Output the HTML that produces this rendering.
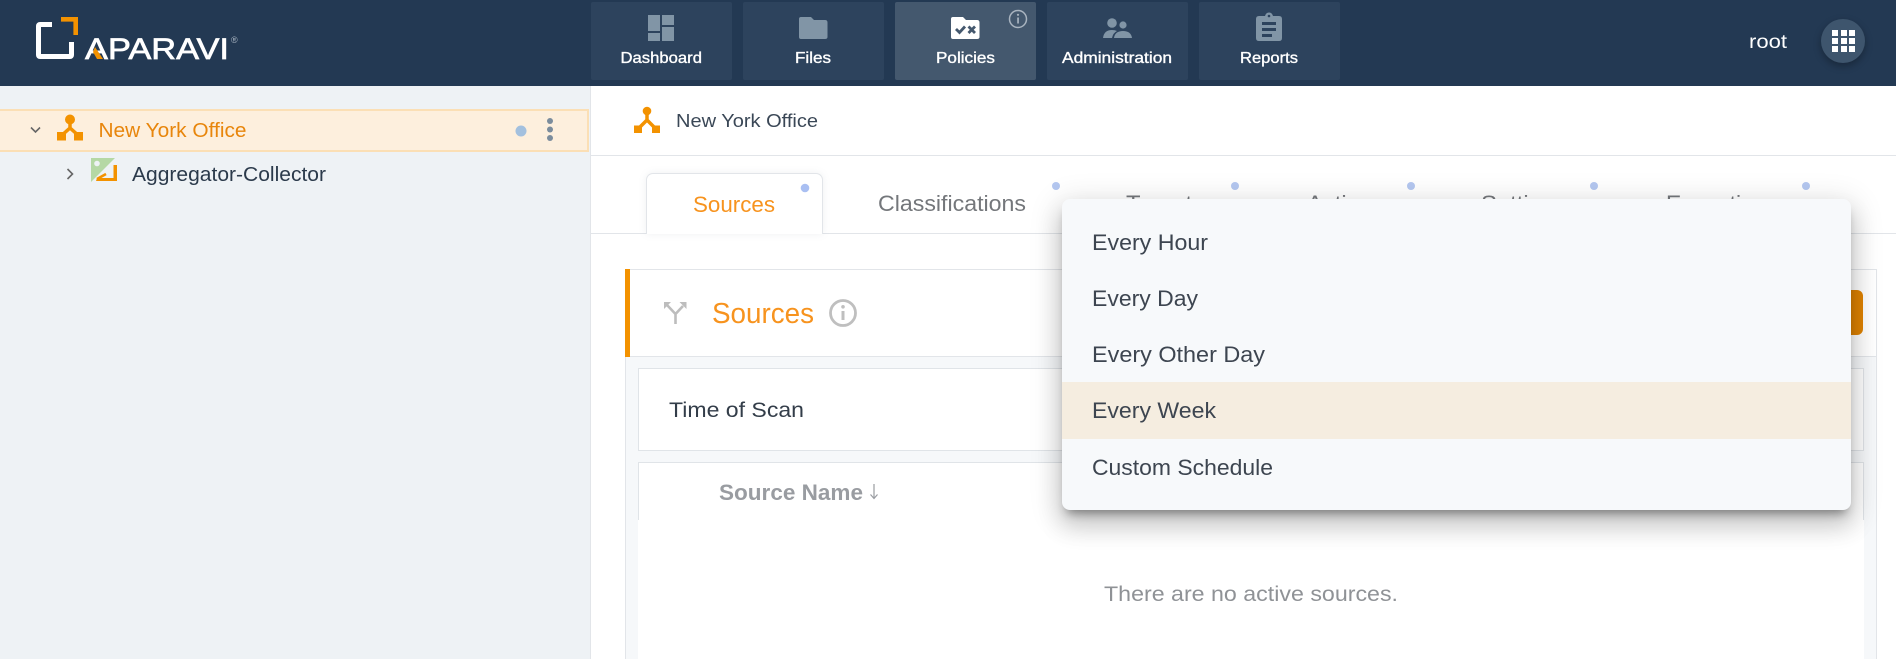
<!DOCTYPE html>
<html><head><meta charset="utf-8"><title>Aparavi</title>
<style>
html,body{margin:0;padding:0;width:1896px;height:659px;overflow:hidden;background:#fff}
body{position:relative;font-family:"Liberation Sans",sans-serif}
div,svg{position:absolute}
svg{left:0;top:0}
.nb{top:2px;height:78px;width:141px;background:#2d435d;border-radius:2px}
</style></head><body>
<div style="left:0;top:86px;width:590px;height:573px;background:#eef2f5;border-right:1px solid #e2e5e9"></div>
<div style="left:0;top:0;width:1896px;height:86px;background:#233953"></div>
<div class="nb" style="left:591px"></div>
<div class="nb" style="left:743px"></div>
<div class="nb" style="left:895px;background:#44586e"></div>
<div class="nb" style="left:1047px"></div>
<div class="nb" style="left:1199px"></div>
<div style="left:1821px;top:19px;width:44px;height:44px;border-radius:50%;background:#3e556d;box-shadow:0 3px 8px rgba(0,0,0,.3)"></div>
<div style="left:0;top:109px;width:589px;height:43px;box-sizing:border-box;background:#fdefdd;border:2px solid #fbdfb5;border-left:0"></div>
<div style="left:591px;top:155px;width:1305px;height:1px;background:#e2e5e9"></div>
<div style="left:591px;top:233px;width:1305px;height:1px;background:#e2e5e9"></div>
<div style="left:646px;top:173px;width:177px;height:61px;box-sizing:border-box;background:#fff;border:1px solid #e2e5e9;border-bottom:0;border-radius:7px 7px 0 0;box-shadow:0 0 8px rgba(120,130,150,.12)"></div>
<!-- card -->
<div style="left:625px;top:269px;width:1252px;height:390px;box-sizing:border-box;background:#f6f8fa;border:1px solid #e2e5e9;border-bottom:0"></div>
<div style="left:625px;top:269px;width:1252px;height:88px;box-sizing:border-box;background:#fff;border:1px solid #e2e5e9"></div>
<div style="left:625px;top:269px;width:5px;height:88px;background:#f39200"></div>
<div style="left:1790px;top:290px;width:73px;height:45px;background:#e08300;border-radius:6px"></div>
<div style="left:638px;top:368px;width:1226px;height:83px;box-sizing:border-box;background:#fff;border:1px solid #e0e4e8"></div>
<div style="left:638px;top:462px;width:1226px;height:197px;background:#fff"></div>
<div style="left:638px;top:462px;width:1226px;height:58px;box-sizing:border-box;border:1px solid #e0e4e8;border-bottom:0"></div>

<svg width="1896" height="659" viewBox="0 0 1896 659" font-family="'Liberation Sans',sans-serif">
<!-- logo -->
<path d="M52 24.500H40Q38.500 24.500 38.500 26V55Q38.500 56.500 40 56.500H70Q71.500 56.500 71.500 55V42" fill="none" stroke="#fff" stroke-width="5"/>
<path d="M61 19.300H75.700V35" fill="none" stroke="#f39200" stroke-width="4.600"/>
<text x="85" y="59" font-size="30" fill="#fff" stroke="#fff" stroke-width=".7" textLength="144" lengthAdjust="spacingAndGlyphs">APARAVI</text>
<path d="M95 47L103 59H97L93 52Z" fill="#f39200"/>
<text x="231" y="43" font-size="9" fill="#a9b5c2">®</text>
<!-- nav labels -->
<g fill="#fff" stroke="#fff" stroke-width=".35" font-size="16">
<text x="620.500" y="63" textLength="81.500" lengthAdjust="spacingAndGlyphs">Dashboard</text>
<text x="795" y="63" textLength="36" lengthAdjust="spacingAndGlyphs">Files</text>
<text x="936" y="63" textLength="59" lengthAdjust="spacingAndGlyphs">Policies</text>
<text x="1062" y="63" textLength="110" lengthAdjust="spacingAndGlyphs">Administration</text>
<text x="1240" y="63" textLength="58" lengthAdjust="spacingAndGlyphs">Reports</text>
</g>
<!-- nav icons -->
<g fill="#8195a6">
<rect x="648" y="15" width="12" height="16"/><rect x="648" y="33" width="12" height="8"/>
<rect x="662" y="15" width="12" height="10"/><rect x="662" y="27" width="12" height="14"/>
<path d="M801 17H811L814 20H825Q827.500 20 827.500 22.500V37Q827.500 39 825 39H801Q799 39 799 37V19Q799 17 801 17Z"/>
<circle cx="1112" cy="23" r="4.800"/><circle cx="1123" cy="25" r="3.600"/>
<path d="M1103 38Q1104 30 1112 30Q1115 30 1117 31Q1113 33 1112 38Z"/><path d="M1114 38Q1115 31 1123 31Q1131 31 1132 38Z"/>
<path d="M1259 16H1265Q1266 12.500 1269 12.500Q1272 12.500 1273 16H1279Q1282 16 1282 19V38Q1282 41 1279 41H1259Q1256 41 1256 38V19Q1256 16 1259 16Z"/>
</g>
<g fill="#2d435d"><rect x="1262" y="22" width="14" height="3"/><rect x="1262" y="28" width="14" height="3"/><rect x="1262" y="34" width="10" height="3"/><circle cx="1269" cy="16" r="1.300"/></g>
<path d="M953 17H963L966 20H977Q979.500 20 979.500 22.500V37Q979.500 39 977 39H953Q951 39 951 37V19Q951 17 953 17Z" fill="#fff"/>
<path d="M956 29L959.500 32.500L965 26.500" fill="none" stroke="#44586e" stroke-width="2.800"/>
<path d="M968.500 26.500L975 33M975 26.500L968.500 33" fill="none" stroke="#44586e" stroke-width="2.800"/>
<circle cx="1018" cy="19" r="8.500" fill="none" stroke="#a9b4c0" stroke-width="1.500"/>
<rect x="1017.200" y="17.500" width="1.700" height="6" fill="#a9b4c0"/><circle cx="1018" cy="14.800" r="1.100" fill="#a9b4c0"/>
<!-- root -->
<text x="1749" y="48" font-size="19" fill="#fff" textLength="38" lengthAdjust="spacingAndGlyphs">root</text>
<g fill="#fff">
<rect x="1832" y="30" width="6" height="6"/><rect x="1841" y="30" width="6" height="6"/><rect x="1849" y="30" width="6" height="6"/>
<rect x="1832" y="38" width="6" height="6"/><rect x="1841" y="38" width="6" height="6"/><rect x="1849" y="38" width="6" height="6"/>
<rect x="1832" y="46" width="6" height="6"/><rect x="1841" y="46" width="6" height="6"/><rect x="1849" y="46" width="6" height="6"/>
</g>
<!-- tree -->
<path d="M31 127.500L35.500 132L40 127.500" fill="none" stroke="#666" stroke-width="1.600"/>
<g fill="#f39200"><circle cx="70" cy="119.500" r="5"/><rect x="57" y="132" width="9" height="8.500"/><rect x="74" y="132" width="9" height="8.500"/></g>
<path d="M70 122V128L61 136M70 128L79 136" fill="none" stroke="#f39200" stroke-width="3.500"/>
<text x="98.500" y="137" font-size="20" fill="#e8860c" textLength="148" lengthAdjust="spacingAndGlyphs">New York Office</text>
<circle cx="521" cy="131" r="5.500" fill="#a3c0de"/>
<g fill="#7b8c9c"><circle cx="550" cy="121" r="3"/><circle cx="550" cy="129.500" r="3"/><circle cx="550" cy="138" r="3"/></g>
<path d="M67.500 169L72.500 174L67.500 179" fill="none" stroke="#666" stroke-width="1.600"/>
<path d="M91 158H115L91 182Z" fill="#b5d8a5"/><circle cx="97" cy="163.500" r="2.800" fill="#eef2f5"/>
<path d="M97 178H113.500V165H117V181H96Z" fill="#f39200"/><path d="M106 174L97 179" stroke="#f39200" stroke-width="2.500"/>
<text x="132" y="181" font-size="20" fill="#2b3a4b" textLength="194" lengthAdjust="spacingAndGlyphs">Aggregator-Collector</text>
<!-- breadcrumb -->
<g fill="#f39200"><circle cx="647" cy="111" r="4.300"/><rect x="634" y="125.500" width="8" height="7.500"/><rect x="652" y="125.500" width="8" height="7.500"/></g>
<path d="M647 114V120L638 129M647 120L656 129" fill="none" stroke="#f39200" stroke-width="3.500"/>
<text x="676" y="127" font-size="18" fill="#3a4756" textLength="142" lengthAdjust="spacingAndGlyphs">New York Office</text>
<!-- tabs -->
<text x="693" y="212" font-size="22" fill="#f7931e" textLength="82" lengthAdjust="spacingAndGlyphs">Sources</text>
<circle cx="805" cy="188" r="4.300" fill="#a9bff2"/>
<text x="878" y="211" font-size="22" fill="#74777b" textLength="148" lengthAdjust="spacingAndGlyphs">Classifications</text>
<text x="1126" y="211" font-size="22" fill="#74777b" textLength="78" lengthAdjust="spacingAndGlyphs">Targets</text>
<text x="1307" y="211" font-size="22" fill="#74777b" textLength="78" lengthAdjust="spacingAndGlyphs">Actions</text>
<text x="1481" y="211" font-size="22" fill="#74777b" textLength="86" lengthAdjust="spacingAndGlyphs">Settings</text>
<text x="1666" y="211" font-size="22" fill="#74777b" textLength="112" lengthAdjust="spacingAndGlyphs">Exceptions</text>
<g fill="#b4c7f0"><circle cx="1056" cy="186" r="4"/><circle cx="1235" cy="186" r="4"/><circle cx="1411" cy="186" r="4"/><circle cx="1594" cy="186" r="4"/><circle cx="1806" cy="186" r="4"/></g>
<!-- card header -->
<path d="M675.500 324V314L667 305M675.500 314L683 306" fill="none" stroke="#bdbdbd" stroke-width="2.600"/>
<path d="M664 302H671L664 309ZM686.500 302H679.500L686.500 309Z" fill="#bdbdbd"/>
<text x="712" y="323" font-size="29" fill="#f7931e" textLength="102" lengthAdjust="spacingAndGlyphs">Sources</text>
<circle cx="843" cy="313" r="12.500" fill="none" stroke="#bfbfbf" stroke-width="2.800"/>
<rect x="841.500" y="311" width="3" height="9" fill="#bfbfbf"/><circle cx="843" cy="306.800" r="1.800" fill="#bfbfbf"/>
<text x="669" y="417" font-size="21" fill="#333d49" textLength="135" lengthAdjust="spacingAndGlyphs">Time of Scan</text>
<text x="719" y="500" font-size="22" font-weight="700" fill="#999ca1" textLength="144" lengthAdjust="spacingAndGlyphs">Source Name</text>
<path d="M874 484V498M870.500 494.500L874 498.500L877.500 494.500" fill="none" stroke="#999ca1" stroke-width="1.200"/>
<text x="1104" y="601" font-size="21" fill="#8f9296" textLength="294" lengthAdjust="spacingAndGlyphs">There are no active sources.</text>
</svg>

<!-- dropdown -->
<div style="left:1062px;top:199px;width:789px;height:311px;background:#f7f9fb;border-radius:8px;box-shadow:0 8px 10px -5px rgba(0,0,0,.4),0 16px 24px 2px rgba(0,0,0,.14),0 6px 30px 5px rgba(0,0,0,.12);overflow:hidden">
<div style="left:0;top:183px;width:789px;height:57px;background:#f5ede0"></div>
</div>
<svg width="1896" height="659" viewBox="0 0 1896 659" font-family="'Liberation Sans',sans-serif" fill="#3d4550" font-size="22">
<text x="1092" y="250" textLength="116" lengthAdjust="spacingAndGlyphs">Every Hour</text>
<text x="1092" y="306" textLength="106" lengthAdjust="spacingAndGlyphs">Every Day</text>
<text x="1092" y="362" textLength="173" lengthAdjust="spacingAndGlyphs">Every Other Day</text>
<text x="1092" y="418" textLength="124" lengthAdjust="spacingAndGlyphs">Every Week</text>
<text x="1092" y="475" textLength="181" lengthAdjust="spacingAndGlyphs">Custom Schedule</text>
</svg>
</body></html>
